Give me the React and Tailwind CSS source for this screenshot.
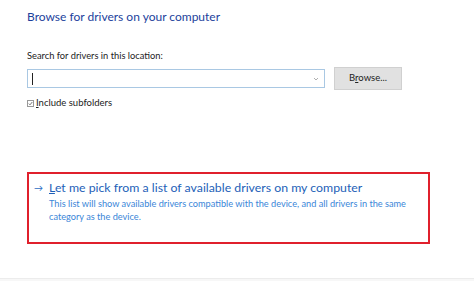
export default function App() {
  return (
    <div
      className="relative flex h-[281px] w-[474px] flex-col overflow-hidden bg-white"
      style={{ fontFamily: 'Lato, "Noto Sans", sans-serif' }}
    >
      <div className="flex flex-1 flex-col pl-[27px]">
        <h1 className="mt-[9px] text-[12px] leading-[16px] text-[#1c3f9c]">
          Browse for drivers on your computer
        </h1>

        <p className="mt-[25px] text-[9.3px] leading-[12px] text-[#222]">
          Search for drivers in this location:
        </p>

        <div className="mt-[5px] flex items-center">
          <div className="flex h-[19px] w-[298px] items-center justify-between border border-[#a9c8e3] bg-white pl-[4px] pr-[5px]">
            <span className="h-[12px] w-px bg-[#222]" />
            <svg width="6" height="4" viewBox="0 0 6 4">
              <path d="M1 1 L3 3 L5 1" stroke="#9a9a9a" fill="none" strokeWidth="0.8" />
            </svg>
          </div>
          <button className="ml-[9px] h-[23px] w-[68px] border border-[#d0d0d0] bg-[#e1e1e1] text-[9.5px] text-[#222]">
            B<span className="underline">r</span>owse...
          </button>
        </div>

        <label className="mt-[7px] flex items-center text-[9.5px] leading-[12px] text-[#222]">
          <span className="mr-[2px] flex h-[7px] w-[7px] items-center justify-center border border-[#999]">
            <svg width="5" height="5" viewBox="0 0 5 5">
              <path d="M0.8 2.6 L2 3.8 L4.3 1" stroke="#555" fill="none" strokeWidth="0.8" />
            </svg>
          </span>
          <span>
            <span className="underline">I</span>nclude subfolders
          </span>
        </label>

        <div className="mt-[63px] h-[72px] w-[403px] border-2 border-[#e0202c] pl-[5px] pt-[6px]">
          <div className="flex items-start">
            <span className="mr-[7px] w-[8px] text-[9px] leading-[16px] text-[#2b6cc4]">→</span>
            <div>
              <p className="text-[12.3px] leading-[16px] text-[#1e5fb8]">
                <span className="underline">L</span>et me pick from a list of available drivers on my computer
              </p>
              <p className="mt-[2px] text-[9.2px] leading-[12.5px] text-[#3a86d8]">
                This list will show available drivers compatible with the device, and all drivers in the same
                <br />
                category as the device.
              </p>
            </div>
          </div>
        </div>
      </div>
      <div className="h-[3px] w-full border-t border-[#ececec] bg-[#f7f7f7]" />
    </div>
  );
}
